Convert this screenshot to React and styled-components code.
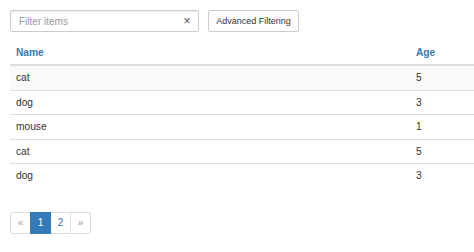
import styled, { createGlobalStyle } from 'styled-components';

const GlobalStyle = createGlobalStyle`
  body {
    margin: 0;
    background: #fff;
    font-family: "Liberation Sans", Arial, sans-serif;
    color: #333;
  }
`;

const Page = styled.div`
  padding: 10px 0 0 10px;
  font-size: 10.2px;
`;

const Toolbar = styled.div`
  display: flex;
  gap: 9px;
  margin-bottom: 10px;
`;

const SearchBox = styled.div`
  width: 189px;
  height: 22px;
  box-sizing: border-box;
  border: 1px solid #ccc;
  border-radius: 2px;
  box-shadow: inset 0 1px 1px rgba(0, 0, 0, 0.075);
  display: flex;
  align-items: center;
`;

const SearchInput = styled.input`
  border: none;
  outline: none;
  background: transparent;
  flex: 1;
  min-width: 0;
  font: inherit;
  font-size: 10px;
  padding: 0 8px;
  color: #555;
  &::placeholder {
    color: #999;
  }
`;

const Clear = styled.span`
  width: 22px;
  text-align: center;
  color: #555;
  font-size: 12px;
`;

const Button = styled.button`
  width: 91px;
  height: 22px;
  box-sizing: border-box;
  border: 1px solid #ccc;
  border-radius: 2px;
  background: #fff;
  color: #333;
  font: inherit;
  font-size: 9px;
  padding: 0;
`;

const Table = styled.table`
  width: 464px;
  border-collapse: collapse;
`;

const Th = styled.th`
  text-align: left;
  color: #337ab7;
  font-weight: bold;
  padding: 3px 6px;
  line-height: 16px;
  border-bottom: 2px solid #ddd;
  width: ${p => p.width || 'auto'};
`;

const Row = styled.tr`
  background: ${p => (p.striped ? '#f9f9f9' : '#fff')};
  border-bottom: 1px solid #ddd;
  &:last-child {
    border-bottom: none;
  }
`;

const Td = styled.td`
  padding: 4px 6px;
  line-height: 15.6px;
`;

const Pager = styled.ul`
  display: flex;
  list-style: none;
  margin: 24px 0 0;
  padding: 0;
`;

const PageItem = styled.li`
  width: 21px;
  height: 22px;
  box-sizing: border-box;
  border: 1px solid ${p => (p.active ? '#337ab7' : '#ddd')};
  margin-left: -1px;
  background: ${p => (p.active ? '#337ab7' : '#fff')};
  color: ${p => (p.active ? '#fff' : p.muted ? '#999' : '#337ab7')};
  display: flex;
  align-items: center;
  justify-content: center;
  font-size: 10px;
  position: relative;
  z-index: ${p => (p.active ? 1 : 0)};
  &:first-child {
    margin-left: 0;
    border-radius: 2px 0 0 2px;
  }
  &:last-child {
    border-radius: 0 2px 2px 0;
  }
`;

const rows = [
  { name: 'cat', age: 5 },
  { name: 'dog', age: 3 },
  { name: 'mouse', age: 1 },
  { name: 'cat', age: 5 },
  { name: 'dog', age: 3 },
];

const App = () => {
  return (
    <Page>
      <GlobalStyle />
      <Toolbar>
        <SearchBox>
          <SearchInput placeholder="Filter items" />
          <Clear>×</Clear>
        </SearchBox>
        <Button>Advanced Filtering</Button>
      </Toolbar>
      <Table>
        <thead>
          <tr>
            <Th>Name</Th>
            <Th width="52px">Age</Th>
          </tr>
        </thead>
        <tbody>
          {rows.map((it, idx) => (
            <Row key={idx} striped={idx === 0}>
              <Td>{it.name}</Td>
              <Td>{it.age}</Td>
            </Row>
          ))}
        </tbody>
      </Table>
      <Pager>
        <PageItem muted>«</PageItem>
        <PageItem active>1</PageItem>
        <PageItem>2</PageItem>
        <PageItem muted>»</PageItem>
      </Pager>
    </Page>
  );
};

export default App;
